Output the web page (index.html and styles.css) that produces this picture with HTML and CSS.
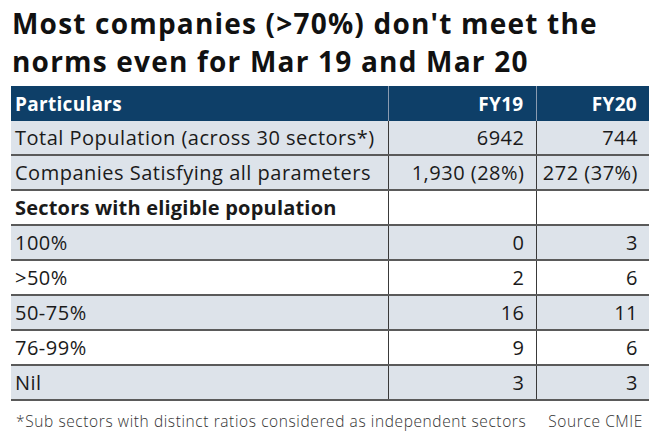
FILE: index.html
```html
<!DOCTYPE html>
<html>
<head>
<meta charset="utf-8">
<link rel="stylesheet" href="styles.css">
</head>
<body>
<div class="card">
  <h1 class="title">Most companies (&gt;70%) don't meet the<br>norms even for Mar 19 and Mar 20</h1>
  <table class="data">
    <colgroup><col class="c1"><col class="c2"><col class="c3"></colgroup>
    <thead>
      <tr><th class="lbl">Particulars</th><th>FY19</th><th>FY20</th></tr>
    </thead>
    <tbody>
      <tr class="shade"><td class="lbl">Total Population (across 30 sectors*)</td><td>6942</td><td>744</td></tr>
      <tr class="shade"><td class="lbl">Companies Satisfying all parameters</td><td>1,930 (28%)</td><td>272 (37%)</td></tr>
      <tr><td class="lbl strong">Sectors with eligible population</td><td></td><td></td></tr>
      <tr class="shade"><td class="lbl">100%</td><td>0</td><td>3</td></tr>
      <tr><td class="lbl">&gt;50%</td><td>2</td><td>6</td></tr>
      <tr class="shade"><td class="lbl">50-75%</td><td>16</td><td>11</td></tr>
      <tr><td class="lbl">76-99%</td><td>9</td><td>6</td></tr>
      <tr class="shade"><td class="lbl">Nil</td><td>3</td><td>3</td></tr>
    </tbody>
  </table>
  <div class="foot">
    <span>*Sub sectors with distinct ratios considered as independent sectors</span>
    <span>Source CMIE</span>
  </div>
</div>
</body>
</html>
```
FILE: styles.css
```css
html, body {
  margin: 0;
  padding: 0;
  background: #ffffff;
}
.card {
  width: 660px;
  height: 440px;
  padding: 4px 11px 0 11px;
  box-sizing: border-box;
  font-family: "Open Sans", "Lato", sans-serif;
  color: #1a1a1a;
}
.title {
  margin: 0 0 6px 1px;
  font-size: 28px;
  line-height: 38px;
  font-weight: 700;
  color: #111;
  letter-spacing: 1.2px;
  white-space: nowrap;
}
.data {
  width: 638px;
  border-collapse: collapse;
  table-layout: fixed;
}
.c1 { width: 377px; }
.c2 { width: 148px; }
.c3 { width: 113px; }
.data th {
  background: #0e3f68;
  color: #fff;
  font-weight: 700;
  font-size: 19px;
  letter-spacing: 0.3px;
  height: 35px;
  padding: 0 12px 0 4px;
  text-align: right;
  border-left: 1px solid #8a9bb0;
}
.data th.lbl { text-align: left; border-left: none; }
.data td {
  font-size: 20px;
  font-weight: 400;
  letter-spacing: 0.5px;
  height: 33px;
  padding: 0 11px 0 4px;
  text-align: right;
  border-top: 2px solid #5a5a5a;
  border-left: 1.5px solid #3a3a3a;
  color: #1a1a1a;
  white-space: nowrap;
}
.data tbody tr:first-child td { border-top: none; }
.data tbody tr:last-child td { border-bottom: 2px solid #5a5a5a; }
.data td.lbl { text-align: left; border-left: none; }
.data td.strong { font-weight: 700; letter-spacing: 0.2px; }
.data tr.shade td { background: #dde3ea; }
.foot {
  display: flex;
  justify-content: space-between;
  margin-top: 9px;
  padding: 0 6px 0 5px;
  font-size: 15.5px;
  font-weight: 300;
  letter-spacing: 0.6px;
  color: #333;
}
```
